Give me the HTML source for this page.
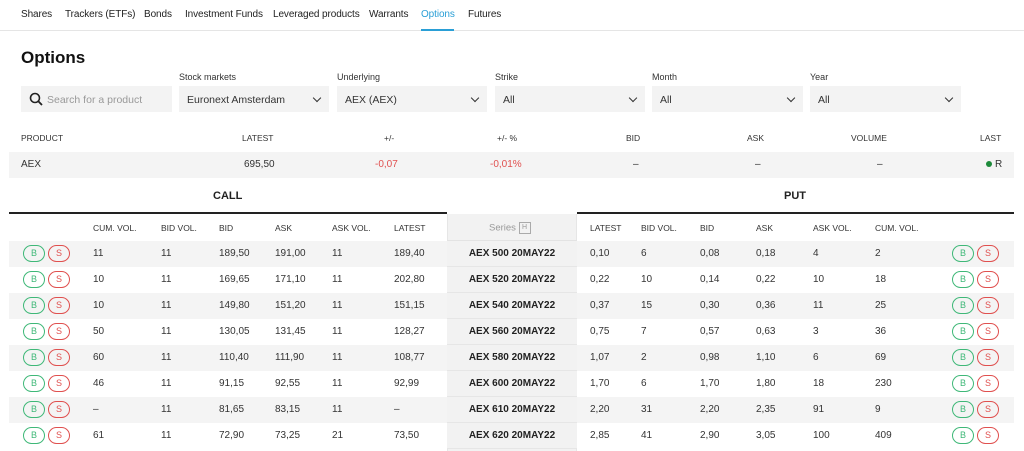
<!DOCTYPE html><html><head><meta charset="utf-8"><style>
*{margin:0;padding:0;box-sizing:border-box}
body{width:1024px;height:451px;background:#fff;font-family:"Liberation Sans",sans-serif;color:#222;position:relative;overflow:hidden;font-size:10px}
i{font-style:normal}
.a{position:absolute;white-space:nowrap}
.nav{top:9px;font-size:10px;color:#222;letter-spacing:-0.1px}
.lbl{top:72px;font-size:9px;color:#333}
.box{position:absolute;top:86px;height:26px;background:#f3f3f3;font-size:10.5px;color:#333;padding:8px 0 0 8px}
.chev{position:absolute;right:9px;top:9px;width:6px;height:6px;border-right:1.6px solid #333;border-bottom:1.6px solid #333;transform:rotate(45deg)}
.h{font-size:8.5px;color:#333}
.row{position:absolute;left:9px;width:1005px;height:26px}
.c{position:absolute;top:7px;font-size:10px;color:#333}
.b,.s{position:absolute;top:4px;width:22px;height:17px;border-radius:9px;font-size:9px;text-align:center;line-height:15px}
.b{border:1.2px solid #3fb878;color:#3fb878}
.s{border:1.2px solid #e0504f;color:#e0504f}
.ser{position:absolute;left:438px;width:130px;top:0;height:26px;text-align:center;font-weight:bold;font-size:10px;line-height:26px;color:#222;background:#f2f2f2;border-bottom:1px solid #e6e6e6}
</style></head><body>
<div class="a nav" style="left:21px">Shares</div>
<div class="a nav" style="left:65px">Trackers (ETFs)</div>
<div class="a nav" style="left:144px">Bonds</div>
<div class="a nav" style="left:185px">Investment Funds</div>
<div class="a nav" style="left:273px">Leveraged products</div>
<div class="a nav" style="left:369px">Warrants</div>
<div class="a nav" style="left:421px;color:#2a9fd6">Options</div>
<div class="a nav" style="left:468px">Futures</div>
<div class="a" style="left:0;top:30px;width:1024px;height:1px;background:#e5e5e5"></div>
<div class="a" style="left:421px;top:29px;width:33px;height:2px;background:#2a9fd6"></div>
<div class="a" style="left:21px;top:48px;font-size:17px;font-weight:bold;color:#111">Options</div>
<div class="a lbl" style="left:179px">Stock markets</div>
<div class="a lbl" style="left:337px">Underlying</div>
<div class="a lbl" style="left:495px">Strike</div>
<div class="a lbl" style="left:652px">Month</div>
<div class="a lbl" style="left:810px">Year</div>
<div class="box" style="left:21px;width:151px;padding-left:26px;color:#999"><svg style="position:absolute;left:8px;top:6px" width="14" height="14" viewBox="0 0 14 14"><circle cx="6" cy="6" r="4.5" fill="none" stroke="#222" stroke-width="1.6"/><path d="M9.3 9.3L13 13" stroke="#222" stroke-width="1.8"/></svg>Search for a product</div>
<div class="box" style="left:179px;width:150px">Euronext Amsterdam<i class="chev"></i></div>
<div class="box" style="left:337px;width:150px">AEX (AEX)<i class="chev"></i></div>
<div class="box" style="left:495px;width:150px">All<i class="chev"></i></div>
<div class="box" style="left:652px;width:151px">All<i class="chev"></i></div>
<div class="box" style="left:810px;width:151px">All<i class="chev"></i></div>

<div class="a h" style="left:21px;top:133px">PRODUCT</div>
<div class="a h" style="left:242px;top:133px">LATEST</div>
<div class="a h" style="left:384px;top:133px">+/-</div>
<div class="a h" style="left:497px;top:133px">+/- %</div>
<div class="a h" style="left:626px;top:133px">BID</div>
<div class="a h" style="left:747px;top:133px">ASK</div>
<div class="a h" style="left:851px;top:133px">VOLUME</div>
<div class="a h" style="left:980px;top:133px">LAST</div>
<div class="a" style="left:9px;top:152px;width:1005px;height:26px;background:#f4f4f4"></div>
<div class="a c" style="left:21px;top:159px">AEX</div>
<div class="a c" style="left:244px;top:159px">695,50</div>
<div class="a c" style="left:375px;top:159px;color:#e0504f">-0,07</div>
<div class="a c" style="left:490px;top:159px;color:#e0504f">-0,01%</div>
<div class="a c" style="left:633px;top:159px">–</div>
<div class="a c" style="left:755px;top:159px">–</div>
<div class="a c" style="left:877px;top:159px">–</div>
<div class="a" style="left:986px;top:161px;width:6px;height:6px;border-radius:3px;background:#1d8a3a"></div>
<div class="a c" style="left:995px;top:159px">R</div>

<div class="a" style="left:213px;top:190px;font-size:11px;font-weight:bold">CALL</div>
<div class="a" style="left:784px;top:190px;font-size:11px;font-weight:bold">PUT</div>
<div class="a" style="left:9px;top:212px;width:438px;height:2px;background:#222"></div>
<div class="a" style="left:577px;top:212px;width:437px;height:2px;background:#222"></div>
<div class="a" style="left:447px;top:214px;width:130px;height:237px;background:#f2f2f2;border-left:1px solid #e6e6e6;border-right:1px solid #e6e6e6"></div>
<div class="a" style="left:447px;top:240px;width:130px;height:1px;background:#e3e3e3"></div>
<div class="a h" style="left:93px;top:223px">CUM. VOL.</div>
<div class="a h" style="left:161px;top:223px">BID VOL.</div>
<div class="a h" style="left:219px;top:223px">BID</div>
<div class="a h" style="left:275px;top:223px">ASK</div>
<div class="a h" style="left:332px;top:223px">ASK VOL.</div>
<div class="a h" style="left:394px;top:223px">LATEST</div>
<div class="a" style="left:489px;top:222px;font-size:9.5px;color:#999">Series <span style="display:inline-block;border:1px solid #aaa;width:12px;height:12px;font-size:7px;text-align:center;line-height:10px;vertical-align:middle">H</span></div>
<div class="a h" style="left:590px;top:223px">LATEST</div>
<div class="a h" style="left:641px;top:223px">BID VOL.</div>
<div class="a h" style="left:700px;top:223px">BID</div>
<div class="a h" style="left:756px;top:223px">ASK</div>
<div class="a h" style="left:813px;top:223px">ASK VOL.</div>
<div class="a h" style="left:875px;top:223px">CUM. VOL.</div>

<div class="row" style="top:241px;background:#f4f4f4"><i class="b" style="left:14px">B</i><i class="s" style="left:39px">S</i><span class="c" style="left:84px">11</span><span class="c" style="left:152px">11</span><span class="c" style="left:210px">189,50</span><span class="c" style="left:266px">191,00</span><span class="c" style="left:323px">11</span><span class="c" style="left:385px">189,40</span><div class="ser">AEX 500 20MAY22</div><span class="c" style="left:581px">0,10</span><span class="c" style="left:632px">6</span><span class="c" style="left:691px">0,08</span><span class="c" style="left:747px">0,18</span><span class="c" style="left:804px">4</span><span class="c" style="left:866px">2</span><i class="b" style="left:943px">B</i><i class="s" style="left:968px">S</i></div>
<div class="row" style="top:267px"><i class="b" style="left:14px">B</i><i class="s" style="left:39px">S</i><span class="c" style="left:84px">10</span><span class="c" style="left:152px">11</span><span class="c" style="left:210px">169,65</span><span class="c" style="left:266px">171,10</span><span class="c" style="left:323px">11</span><span class="c" style="left:385px">202,80</span><div class="ser">AEX 520 20MAY22</div><span class="c" style="left:581px">0,22</span><span class="c" style="left:632px">10</span><span class="c" style="left:691px">0,14</span><span class="c" style="left:747px">0,22</span><span class="c" style="left:804px">10</span><span class="c" style="left:866px">18</span><i class="b" style="left:943px">B</i><i class="s" style="left:968px">S</i></div>
<div class="row" style="top:293px;background:#f4f4f4"><i class="b" style="left:14px">B</i><i class="s" style="left:39px">S</i><span class="c" style="left:84px">10</span><span class="c" style="left:152px">11</span><span class="c" style="left:210px">149,80</span><span class="c" style="left:266px">151,20</span><span class="c" style="left:323px">11</span><span class="c" style="left:385px">151,15</span><div class="ser">AEX 540 20MAY22</div><span class="c" style="left:581px">0,37</span><span class="c" style="left:632px">15</span><span class="c" style="left:691px">0,30</span><span class="c" style="left:747px">0,36</span><span class="c" style="left:804px">11</span><span class="c" style="left:866px">25</span><i class="b" style="left:943px">B</i><i class="s" style="left:968px">S</i></div>
<div class="row" style="top:319px"><i class="b" style="left:14px">B</i><i class="s" style="left:39px">S</i><span class="c" style="left:84px">50</span><span class="c" style="left:152px">11</span><span class="c" style="left:210px">130,05</span><span class="c" style="left:266px">131,45</span><span class="c" style="left:323px">11</span><span class="c" style="left:385px">128,27</span><div class="ser">AEX 560 20MAY22</div><span class="c" style="left:581px">0,75</span><span class="c" style="left:632px">7</span><span class="c" style="left:691px">0,57</span><span class="c" style="left:747px">0,63</span><span class="c" style="left:804px">3</span><span class="c" style="left:866px">36</span><i class="b" style="left:943px">B</i><i class="s" style="left:968px">S</i></div>
<div class="row" style="top:345px;background:#f4f4f4"><i class="b" style="left:14px">B</i><i class="s" style="left:39px">S</i><span class="c" style="left:84px">60</span><span class="c" style="left:152px">11</span><span class="c" style="left:210px">110,40</span><span class="c" style="left:266px">111,90</span><span class="c" style="left:323px">11</span><span class="c" style="left:385px">108,77</span><div class="ser">AEX 580 20MAY22</div><span class="c" style="left:581px">1,07</span><span class="c" style="left:632px">2</span><span class="c" style="left:691px">0,98</span><span class="c" style="left:747px">1,10</span><span class="c" style="left:804px">6</span><span class="c" style="left:866px">69</span><i class="b" style="left:943px">B</i><i class="s" style="left:968px">S</i></div>
<div class="row" style="top:371px"><i class="b" style="left:14px">B</i><i class="s" style="left:39px">S</i><span class="c" style="left:84px">46</span><span class="c" style="left:152px">11</span><span class="c" style="left:210px">91,15</span><span class="c" style="left:266px">92,55</span><span class="c" style="left:323px">11</span><span class="c" style="left:385px">92,99</span><div class="ser">AEX 600 20MAY22</div><span class="c" style="left:581px">1,70</span><span class="c" style="left:632px">6</span><span class="c" style="left:691px">1,70</span><span class="c" style="left:747px">1,80</span><span class="c" style="left:804px">18</span><span class="c" style="left:866px">230</span><i class="b" style="left:943px">B</i><i class="s" style="left:968px">S</i></div>
<div class="row" style="top:397px;background:#f4f4f4"><i class="b" style="left:14px">B</i><i class="s" style="left:39px">S</i><span class="c" style="left:84px">–</span><span class="c" style="left:152px">11</span><span class="c" style="left:210px">81,65</span><span class="c" style="left:266px">83,15</span><span class="c" style="left:323px">11</span><span class="c" style="left:385px">–</span><div class="ser">AEX 610 20MAY22</div><span class="c" style="left:581px">2,20</span><span class="c" style="left:632px">31</span><span class="c" style="left:691px">2,20</span><span class="c" style="left:747px">2,35</span><span class="c" style="left:804px">91</span><span class="c" style="left:866px">9</span><i class="b" style="left:943px">B</i><i class="s" style="left:968px">S</i></div>
<div class="row" style="top:423px"><i class="b" style="left:14px">B</i><i class="s" style="left:39px">S</i><span class="c" style="left:84px">61</span><span class="c" style="left:152px">11</span><span class="c" style="left:210px">72,90</span><span class="c" style="left:266px">73,25</span><span class="c" style="left:323px">21</span><span class="c" style="left:385px">73,50</span><div class="ser">AEX 620 20MAY22</div><span class="c" style="left:581px">2,85</span><span class="c" style="left:632px">41</span><span class="c" style="left:691px">2,90</span><span class="c" style="left:747px">3,05</span><span class="c" style="left:804px">100</span><span class="c" style="left:866px">409</span><i class="b" style="left:943px">B</i><i class="s" style="left:968px">S</i></div>
</body></html>
